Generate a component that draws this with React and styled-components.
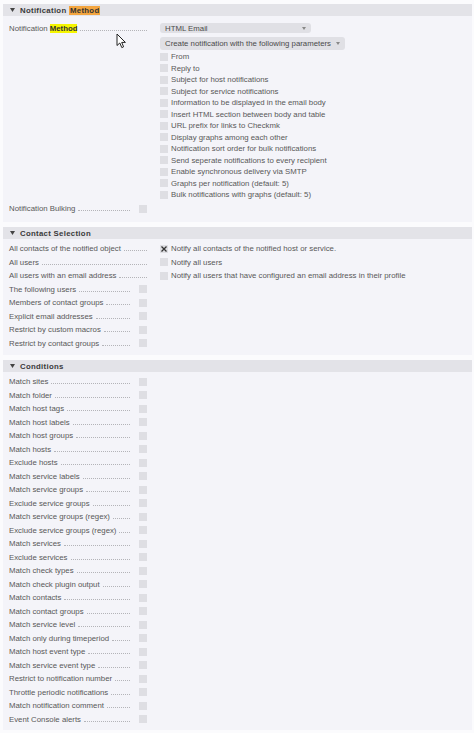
import React from "react";
import styled, { createGlobalStyle } from "styled-components";

const Global = createGlobalStyle`
  html, body { margin: 0; padding: 0; background: #fbfbfd; }
  body { font-family: "Liberation Sans", Arial, sans-serif; color: #555; }
  * { box-sizing: border-box; }
`;

const Page = styled.div`
  position: relative;
  width: 474px;
  padding: 4px 2px 0 3px;
  display: flex;
  flex-direction: column;
  gap: 5px;
`;

const Section = styled.section`
  display: flex;
  flex-direction: column;
`;

const Header = styled.div`
  height: 12px;
  background: #e3e3e8;
  display: flex;
  align-items: center;
  padding-left: 7px;
  gap: 5px;
  font-size: 7.8px;
  font-weight: bold;
  letter-spacing: 0.3px;
  color: #3a3a3a;
`;

const Body = styled.div`
  background: #f4f4f9;
  padding: ${(p) => p.$pad};
  display: flex;
  flex-direction: column;
`;

const Row = styled.div`
  display: grid;
  grid-template-columns: 157px 1fr;
  margin-top: ${(p) => p.$mt || 0}px;
`;

const LabelCell = styled.div`
  display: flex;
  align-items: center;
  height: ${(p) => p.$h}px;
  padding: 0 13px 0 6px;
  font-size: 7.8px;
  color: #585858;
  white-space: nowrap;
`;

const Leader = styled.span`
  flex: 1;
  height: 0;
  margin: 4px 0 0 3px;
  border-bottom: 1px dotted #b4b4b8;
`;

const Box = styled.span`
  flex: none;
  width: 8px;
  height: 8px;
  background: #dedee3;
  margin-left: ${(p) => p.$ml || 0}px;
  display: inline-flex;
  align-items: center;
  justify-content: center;
`;

const Right = styled.div`
  display: flex;
  flex-direction: column;
`;

const Select = styled.div`
  width: ${(p) => p.$w}px;
  height: ${(p) => p.$h}px;
  margin-bottom: ${(p) => p.$mb}px;
  background: #e0e0e5;
  border-radius: 3px;
  display: flex;
  align-items: center;
  justify-content: space-between;
  padding: 0 5px 0 5px;
  font-size: 7.8px;
  color: #4a4a4a;
  white-space: nowrap;
`;

const Option = styled.div`
  display: flex;
  align-items: center;
  gap: 3px;
  height: ${(p) => p.$h}px;
  font-size: 7.8px;
  color: #585858;
  white-space: nowrap;
`;

const MarkYellow = styled.b`
  background: #f5f500;
  color: #333;
`;

const MarkOrange = styled.span`
  background: #f3a53f;
  color: #333;
  padding: 0 1px;
`;

const Cursor = styled.svg`
  position: absolute;
  left: 116px;
  top: 33px;
`;

const Tri = () => (
  <svg width="5" height="4" viewBox="0 0 5 4">
    <path d="M0 0 H5 L2.5 4 Z" fill="#444" />
  </svg>
);

const Caret = () => (
  <svg width="4" height="3" viewBox="0 0 4 3">
    <path d="M0 0 H4 L2 3 Z" fill="#888" />
  </svg>
);

const Cross = () => (
  <svg width="8" height="8" viewBox="0 0 8 8">
    <path d="M1.5 1.5 L6.5 6.5 M6.5 1.5 L1.5 6.5" stroke="#333" strokeWidth="1.3" />
  </svg>
);

const emailOpts = [
  "From",
  "Reply to",
  "Subject for host notifications",
  "Subject for service notifications",
  "Information to be displayed in the email body",
  "Insert HTML section between body and table",
  "URL prefix for links to Checkmk",
  "Display graphs among each other",
  "Notification sort order for bulk notifications",
  "Send seperate notifications to every recipient",
  "Enable synchronous delivery via SMTP",
  "Graphs per notification (default: 5)",
  "Bulk notifications with graphs (default: 5)",
];

const contactRows = [
  { label: "All contacts of the notified object", opt: "Notify all contacts of the notified host or service.", checked: true },
  { label: "All users", opt: "Notify all users" },
  { label: "All users with an email address", opt: "Notify all users that have configured an email address in their profile" },
  { label: "The following users" },
  { label: "Members of contact groups" },
  { label: "Explicit email addresses" },
  { label: "Restrict by custom macros" },
  { label: "Restrict by contact groups" },
];

const conditions = [
  "Match sites",
  "Match folder",
  "Match host tags",
  "Match host labels",
  "Match host groups",
  "Match hosts",
  "Exclude hosts",
  "Match service labels",
  "Match service groups",
  "Exclude service groups",
  "Match service groups (regex)",
  "Exclude service groups (regex)",
  "Match services",
  "Exclude services",
  "Match check types",
  "Match check plugin output",
  "Match contacts",
  "Match contact groups",
  "Match service level",
  "Match only during timeperiod",
  "Match host event type",
  "Match service event type",
  "Restrict to notification number",
  "Throttle periodic notifications",
  "Match notification comment",
  "Event Console alerts",
];

const H = 13.5;

export default function App() {
  return (
    <>
      <Global />
      <Page>
        <Section>
          <Header>
            <Tri />
            <span>
              Notification <MarkOrange>Method</MarkOrange>
            </span>
          </Header>
          <Body $pad="7px 0 6.5px 0">
            <Row>
              <LabelCell $h={10}>
                Notification&nbsp;<MarkYellow>Method</MarkYellow>
                <Leader />
              </LabelCell>
              <Right>
                <Select $w={151} $h={10} $mb={4}>
                  <span>HTML Email</span>
                  <Caret />
                </Select>
                <Select $w={185} $h={13} $mb={1}>
                  <span>Create notification with the following parameters</span>
                  <Caret />
                </Select>
                {emailOpts.map((o) => (
                  <Option key={o} $h={11.5}>
                    <Box />
                    {o}
                  </Option>
                ))}
              </Right>
            </Row>
            <Row $mt={1.5}>
              <LabelCell $h={H}>
                Notification Bulking
                <Leader />
                <Box $ml={9} />
              </LabelCell>
            </Row>
          </Body>
        </Section>

        <Section>
          <Header>
            <Tri />
            <span>Contact Selection</span>
          </Header>
          <Body $pad="3px 0 5px 0">
            {contactRows.map((r) => (
              <Row key={r.label}>
                <LabelCell $h={H}>
                  {r.label}
                  <Leader />
                  {!r.opt && <Box $ml={9} />}
                </LabelCell>
                {r.opt && (
                  <Option $h={H}>
                    <Box>{r.checked && <Cross />}</Box>
                    {r.opt}
                  </Option>
                )}
              </Row>
            ))}
          </Body>
        </Section>

        <Section>
          <Header>
            <Tri />
            <span>Conditions</span>
          </Header>
          <Body $pad="3px 0 4px 0">
            {conditions.map((c) => (
              <Row key={c}>
                <LabelCell $h={H}>
                  {c}
                  <Leader />
                  <Box $ml={9} />
                </LabelCell>
              </Row>
            ))}
          </Body>
        </Section>

        <Cursor width="11" height="16" viewBox="0 0 11 16">
          <path
            d="M1 1 L1 12.5 L3.8 10 L5.8 14.6 L7.6 13.8 L5.7 9.4 L9.4 9.4 Z"
            fill="#fff"
            stroke="#222"
            strokeWidth="1"
            strokeLinejoin="round"
          />
        </Cursor>
      </Page>
    </>
  );
}
